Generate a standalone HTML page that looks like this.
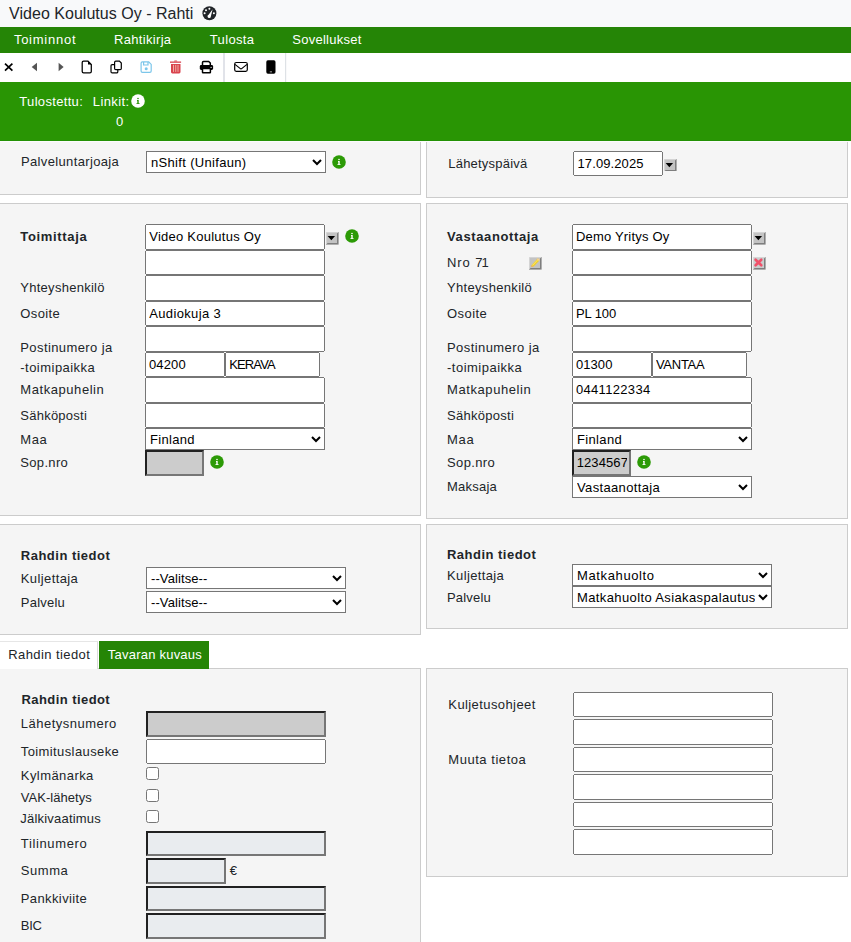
<!DOCTYPE html>
<html lang="fi"><head><meta charset="utf-8"><title>Video Koulutus Oy - Rahti</title>
<style>
html,body{margin:0;padding:0}
body{width:851px;height:942px;overflow:hidden;position:relative;background:#fff;font-family:"Liberation Sans",sans-serif;font-size:13px;color:#212529}
.titlebar{position:absolute;left:0;top:0;width:851px;height:27px;background:#f8f9fa}
.menubar{position:absolute;left:0;top:27px;width:851px;height:26px;background:#258506}
.menubar .t{margin-top:-27px}
.toolbar{position:absolute;left:0;top:53px;width:851px;height:29px;background:#fff}
.band{position:absolute;left:0;top:82px;width:851px;height:60px;box-sizing:border-box;background:#299504;z-index:2;border-bottom:1px solid #fbfbfb;box-shadow:inset 0 -1px 0 #239105}
.band .t,.band .ic{margin-top:-82px}
.t{position:absolute;white-space:pre;line-height:16px;font-size:13px}
.ic{position:absolute;display:block}
.panel{position:absolute;box-sizing:border-box;background:#f5f5f5;border:1px solid #ccc}
input[type=text]{position:absolute;box-sizing:border-box;margin:0;font-family:"Liberation Sans",sans-serif;font-size:13px;color:#000}
input.g{background-color:#ccc;border:2px inset #767676;color:#212529}
input.g2{background-color:#e9ecef;border:2px inset #767676}
select{position:absolute;box-sizing:border-box;margin:0;font-family:"Liberation Sans",sans-serif;font-size:13px;color:#000;background-color:#fff}
input[type=checkbox]{position:absolute;margin:0;width:13px;height:13px}
.tab1{position:absolute;left:0;top:641px;width:98px;height:28px;background:#fff;box-sizing:border-box;border-right:1px solid #dcdcdc;border-top:1px solid #e6e6e6}
.tab2{position:absolute;left:99px;top:641px;width:110px;height:28px;background:#258506}
</style></head>
<body>
<div class="titlebar">
<span class="t" style="left:9.1px;top:3px;letter-spacing:0.02px;font-size:16px;line-height:22px;color:#212529">Video Koulutus Oy - Rahti</span>
<svg class="ic" style="left:202px;top:5.5px" width="15" height="15" viewBox="0 0 15 15"><circle cx="7.4" cy="7.2" r="7" fill="#212529"/><circle cx="7.4" cy="2.8" r="1" fill="#fff"/><circle cx="4" cy="4.3" r="1" fill="#fff"/><circle cx="2.6" cy="7.3" r="1" fill="#fff"/><circle cx="11.9" cy="7.3" r="1" fill="#fff"/><path d="M10.6 3.2L8.9 10.2a1.7 1.7 0 1 1-2.3-1.4z" fill="#fff"/></svg>
</div>
<div class="menubar">
<span class="t" style="left:13.9px;top:32px;letter-spacing:0.745px;color:#fff">Toiminnot</span>
<span class="t" style="left:114.0px;top:32px;letter-spacing:0.324px;color:#fff">Rahtikirja</span>
<span class="t" style="left:209.8px;top:32px;letter-spacing:0.341px;color:#fff">Tulosta</span>
<span class="t" style="left:292.2px;top:32px;letter-spacing:0.272px;color:#fff">Sovellukset</span>
</div>
<div class="toolbar"><svg class="ic" style="left:0;top:0" width="300" height="29" viewBox="0 53 300 29" fill="none">
<rect x="223.2" y="53" width="1.6" height="29" fill="#dadde4"/>
<rect x="285" y="53" width="1.2" height="29" fill="#dee2e6"/>
<path d="M5 63.6L12.4 70.6M12.4 63.6L5 70.6" stroke="#000" stroke-width="1.7"/>
<path d="M37 62.8V71.2L31.7 67z" fill="#555"/>
<path d="M58.6 62.8V71.2L63.6 67z" fill="#555"/>
<path d="M82.2 62.6a1.4 1.4 0 0 1 1.4-1.4H88l3.3 3.3v6.9a1.4 1.4 0 0 1-1.4 1.4H83.6a1.4 1.4 0 0 1-1.4-1.4z" stroke="#000" stroke-width="1.25"/>
<path d="M88 61.2v3.3h3.3z" fill="#000"/>
<path d="M114.6 62.4a1.2 1.2 0 0 1 1.2-1.2h3.6l1.9 1.9v5.4a1.2 1.2 0 0 1-1.2 1.2h-4.3a1.2 1.2 0 0 1-1.2-1.2z" stroke="#000" stroke-width="1.2"/>
<path d="M114.4 64.6h-2.2a1.2 1.2 0 0 0-1.2 1.2v5.9a1.2 1.2 0 0 0 1.2 1.2h4.4a1.2 1.2 0 0 0 1.2-1.2v-1.8" stroke="#000" stroke-width="1.2"/>
<path d="M141.1 63.2a1.3 1.3 0 0 1 1.3-1.3h6.3l2.5 2.5v6.6a1.3 1.3 0 0 1-1.3 1.3h-7.5a1.3 1.3 0 0 1-1.3-1.3z" stroke="#7cc6ea" stroke-width="1.2"/>
<path d="M143.6 62v3h4.4v-3" stroke="#7cc6ea" stroke-width="1.2"/>
<circle cx="146.2" cy="68.7" r="1.5" fill="#7cc6ea"/>
<path d="M170 62.15h11.1" stroke="#d9434e" stroke-width="1.3"/>
<path d="M174.1 61.6v-.5a.7.7 0 0 1 .7-.7h1.7a.7.7 0 0 1 .7.7v.5z" fill="#d9434e"/>
<path d="M171 63.9h9.5v8.2a1.4 1.4 0 0 1-1.4 1.4h-6.7a1.4 1.4 0 0 1-1.4-1.4z" fill="#d9434e"/>
<path d="M173.5 64.9v7M175.75 64.9v7M178 64.9v7" stroke="#f3c3b4" stroke-width=".85"/>
<path d="M202.5 65v-2.6a1 1 0 0 1 1-1h5.2l1.6 1.6v2" stroke="#000" stroke-width="1.5"/>
<rect x="199.8" y="65" width="13.3" height="5" rx="1.4" fill="#000"/>
<rect x="202.5" y="68.6" width="7.9" height="4.2" rx=".5" stroke="#000" stroke-width="1.5" fill="#fff"/>
<circle cx="211.1" cy="67.4" r=".65" fill="#e8e8e8"/>
<rect x="234.7" y="62.5" width="12.6" height="8.8" rx="1.5" stroke="#000" stroke-width="1.2"/>
<path d="M235 64.4l5 4a1.6 1.6 0 0 0 2 0l5-4" stroke="#000" stroke-width="1.2"/>
<rect x="266.3" y="60.3" width="9.2" height="13.4" rx="1.6" fill="#000"/>
<rect x="269.8" y="71.2" width="2.2" height="1.2" fill="#8a8a8a"/>
</svg>
</div>
<div class="band">
<span class="t" style="left:19.3px;top:94px;letter-spacing:0.328px;color:#fff">Tulostettu:</span>
<span class="t" style="left:92.8px;top:94px;letter-spacing:0.372px;color:#fff">Linkit:</span>
<span class="t" style="left:116.0px;top:114px;letter-spacing:0px;color:#fff">0</span>
<svg class="ic" style="left:130.7px;top:94.3px" width="14" height="14" viewBox="0 0 14 14"><circle cx="7" cy="7" r="6.8" fill="#fff"/><circle cx="7" cy="4.55" r=".8" fill="#2a9505"/><path d="M6 6h1.7v3.2h.9v.9H5.4v-.9h.9V6.9H6z" fill="#2a9505"/></svg>
</div>
<div class="panel" style="left:-1px;top:140px;width:422px;height:55px"></div>
<div class="panel" style="left:-1px;top:203px;width:422px;height:313px"></div>
<div class="panel" style="left:-1px;top:524px;width:422px;height:111px"></div>
<div class="panel" style="left:-1px;top:668px;width:422px;height:300px"></div>
<div class="panel" style="left:426px;top:140px;width:422px;height:58px"></div>
<div class="panel" style="left:426px;top:203px;width:422px;height:316px"></div>
<div class="panel" style="left:426px;top:524px;width:422px;height:105px"></div>
<div class="panel" style="left:426px;top:668px;width:422px;height:209px"></div>
<span class="t" style="left:21.0px;top:154px;letter-spacing:0.352px">Palveluntarjoaja</span>
<select style="left:146px;top:151px;width:180px;height:22px;letter-spacing:0.325px"><option>nShift (Unifaun)</option></select>
<svg class="ic" style="left:332px;top:155px" width="14" height="14" viewBox="0 0 14 14"><circle cx="7" cy="7" r="6.8" fill="#2c9a06"/><circle cx="7" cy="4.55" r=".8" fill="#fff"/><path d="M6 6h1.7v3.2h.9v.9H5.4v-.9h.9V6.9H6z" fill="#fff"/></svg>
<span class="t" style="left:448.3px;top:156px;letter-spacing:0.207px">Lähetyspäivä</span>
<input type="text" style="left:573px;top:151px;width:90px;height:25px;letter-spacing:0.102px;padding-left:2.5px" value="17.09.2025">
<svg class="ic" style="left:664.2px;top:158.6px" width="12.6" height="12.6" viewBox="0 0 12.6 12.6"><rect width="12.6" height="12.6" fill="#7e7e7e"/><path d="M0 0h12.6L11 1.6V11H1.6L0 12.6z" fill="#d9d9d9"/><rect x=".8" y=".8" width="10.2" height="10.2" fill="#c3c3c3"/><path d="M1.6 3.9h7.5L5.35 8.3z" fill="#000"/></svg>
<span class="t" style="left:20.3px;top:229px;letter-spacing:0.674px;font-weight:700">Toimittaja</span>
<span class="t" style="left:20.3px;top:280px;letter-spacing:0.271px">Yhteyshenkilö</span>
<span class="t" style="left:20.3px;top:306px;letter-spacing:0.384px">Osoite</span>
<span class="t" style="left:20.3px;top:340px;letter-spacing:0.406px">Postinumero ja</span>
<span class="t" style="left:20.3px;top:360px;letter-spacing:0.467px">-toimipaikka</span>
<span class="t" style="left:20.3px;top:382px;letter-spacing:0.561px">Matkapuhelin</span>
<span class="t" style="left:20.3px;top:408px;letter-spacing:0.241px">Sähköposti</span>
<span class="t" style="left:20.3px;top:432px;letter-spacing:0.602px">Maa</span>
<span class="t" style="left:20.3px;top:455px;letter-spacing:0.326px">Sop.nro</span>
<input type="text" style="left:145px;top:224px;width:180px;height:26px;letter-spacing:0.253px;padding-left:2.2px;padding-bottom:2px" value="Video Koulutus Oy">
<input type="text" style="left:145px;top:250px;width:180px;height:25px" value="">
<input type="text" style="left:145px;top:275px;width:180px;height:26px;padding-bottom:2px" value="">
<input type="text" style="left:145px;top:301px;width:180px;height:25px;letter-spacing:0.355px;padding-left:2.2px" value="Audiokuja 3">
<input type="text" style="left:145px;top:326px;width:180px;height:26px;padding-bottom:2px" value="">
<input type="text" style="left:145px;top:352px;width:80px;height:25px;letter-spacing:0.161px;padding-left:1.9px" value="04200">
<input type="text" style="left:225px;top:352px;width:95px;height:25px;letter-spacing:-0.866px;padding-left:2.2px" value="KERAVA">
<input type="text" style="left:145px;top:377px;width:180px;height:26px;padding-bottom:2px" value="">
<input type="text" style="left:145px;top:403px;width:180px;height:25px" value="">
<select style="left:145px;top:428px;width:180px;height:22px;letter-spacing:0.327px"><option>Finland</option></select>
<input type="text" class="g" style="left:145px;top:450px;width:59px;height:26px" value="">
<svg class="ic" style="left:326.2px;top:232.2px" width="12.6" height="12.6" viewBox="0 0 12.6 12.6"><rect width="12.6" height="12.6" fill="#7e7e7e"/><path d="M0 0h12.6L11 1.6V11H1.6L0 12.6z" fill="#d9d9d9"/><rect x=".8" y=".8" width="10.2" height="10.2" fill="#c3c3c3"/><path d="M1.6 3.9h7.5L5.35 8.3z" fill="#000"/></svg>
<svg class="ic" style="left:344.9px;top:229.1px" width="14" height="14" viewBox="0 0 14 14"><circle cx="7" cy="7" r="6.8" fill="#2c9a06"/><circle cx="7" cy="4.55" r=".8" fill="#fff"/><path d="M6 6h1.7v3.2h.9v.9H5.4v-.9h.9V6.9H6z" fill="#fff"/></svg>
<svg class="ic" style="left:210px;top:455.3px" width="14" height="14" viewBox="0 0 14 14"><circle cx="7" cy="7" r="6.8" fill="#2c9a06"/><circle cx="7" cy="4.55" r=".8" fill="#fff"/><path d="M6 6h1.7v3.2h.9v.9H5.4v-.9h.9V6.9H6z" fill="#fff"/></svg>
<span class="t" style="left:447.0px;top:229px;letter-spacing:0.623px;font-weight:700">Vastaanottaja</span>
<span class="t" style="left:447.0px;top:255px;letter-spacing:0.923px">Nro</span>
<span class="t" style="left:475.3px;top:255px;letter-spacing:-0.969px">71</span>
<span class="t" style="left:447.0px;top:280px;letter-spacing:0.321px">Yhteyshenkilö</span>
<span class="t" style="left:447.0px;top:306px;letter-spacing:0.444px">Osoite</span>
<span class="t" style="left:447.0px;top:340px;letter-spacing:0.429px">Postinumero ja</span>
<span class="t" style="left:447.0px;top:360px;letter-spacing:0.495px">-toimipaikka</span>
<span class="t" style="left:447.0px;top:382px;letter-spacing:0.588px">Matkapuhelin</span>
<span class="t" style="left:447.0px;top:408px;letter-spacing:0.275px">Sähköposti</span>
<span class="t" style="left:447.0px;top:432px;letter-spacing:0.752px">Maa</span>
<span class="t" style="left:447.0px;top:455px;letter-spacing:0.376px">Sop.nro</span>
<span class="t" style="left:447.0px;top:479px;letter-spacing:0.23px">Maksaja</span>
<input type="text" style="left:572px;top:224px;width:180px;height:26px;letter-spacing:0.194px;padding-left:1.9px;padding-bottom:2px" value="Demo Yritys Oy">
<input type="text" style="left:572px;top:250px;width:180px;height:25px" value="">
<input type="text" style="left:572px;top:275px;width:180px;height:26px;padding-bottom:2px" value="">
<input type="text" style="left:572px;top:301px;width:180px;height:25px;letter-spacing:-0.087px;padding-left:1.9px" value="PL 100">
<input type="text" style="left:572px;top:326px;width:180px;height:26px;padding-bottom:2px" value="">
<input type="text" style="left:572px;top:352px;width:80px;height:25px;letter-spacing:0.086px;padding-left:1.9px" value="01300">
<input type="text" style="left:652px;top:352px;width:95px;height:25px;letter-spacing:-0.259px;padding-left:1.9px" value="VANTAA">
<input type="text" style="left:572px;top:377px;width:180px;height:26px;letter-spacing:0.328px;padding-left:1.9px;padding-bottom:2px" value="0441122334">
<input type="text" style="left:572px;top:403px;width:180px;height:25px" value="">
<select style="left:572px;top:428px;width:180px;height:22px;letter-spacing:0.343px"><option>Finland</option></select>
<input type="text" class="g" style="left:572px;top:450px;width:59px;height:26px;letter-spacing:0.096px;padding-left:2.7px;padding-bottom:3px;color:#000" value="1234567">
<select style="left:572px;top:476px;width:180px;height:22px;letter-spacing:0.346px"><option>Vastaanottaja</option></select>
<svg class="ic" style="left:753.2px;top:232.2px" width="12.6" height="12.6" viewBox="0 0 12.6 12.6"><rect width="12.6" height="12.6" fill="#7e7e7e"/><path d="M0 0h12.6L11 1.6V11H1.6L0 12.6z" fill="#d9d9d9"/><rect x=".8" y=".8" width="10.2" height="10.2" fill="#c3c3c3"/><path d="M1.6 3.9h7.5L5.35 8.3z" fill="#000"/></svg>
<svg class="ic" style="left:529.2px;top:257px" width="12.6" height="12.6" viewBox="0 0 12.6 12.6"><rect width="12.6" height="12.6" fill="#7e7e7e"/><path d="M0 0h12.6L11 1.6V11H1.6L0 12.6z" fill="#d9d9d9"/><rect x=".8" y=".8" width="10.2" height="10.2" fill="#c3c3c3"/><path d="M2.1 10L2.7 7.9 8.8 1.3 10.9 3.1 4.7 9.5z" fill="#f0d12e"/><path d="M8.8 1.3L10.9 3.1 10 4.1 7.9 2.3z" fill="#f5cfa2"/><path d="M2.1 10L2.7 7.9 4.7 9.5z" fill="#e9ab6d"/><path d="M3.4 8.4L8.6 3" stroke="#f9e878" stroke-width=".9"/></svg>
<svg class="ic" style="left:753.2px;top:257.1px" width="12.6" height="12.6" viewBox="0 0 12.6 12.6"><rect width="12.6" height="12.6" fill="#7e7e7e"/><path d="M0 0h12.6L11 1.6V11H1.6L0 12.6z" fill="#d9d9d9"/><rect x=".8" y=".8" width="10.2" height="10.2" fill="#c9cdcd"/><path d="M2.6 2.7L8.3 8.3M8.3 2.7L2.6 8.3" stroke="#f0516a" stroke-width="2.6" stroke-linecap="round"/></svg>
<svg class="ic" style="left:636.8px;top:455.3px" width="14" height="14" viewBox="0 0 14 14"><circle cx="7" cy="7" r="6.8" fill="#2c9a06"/><circle cx="7" cy="4.55" r=".8" fill="#fff"/><path d="M6 6h1.7v3.2h.9v.9H5.4v-.9h.9V6.9H6z" fill="#fff"/></svg>
<span class="t" style="left:20.8px;top:548px;letter-spacing:0.496px;font-weight:700">Rahdin tiedot</span>
<span class="t" style="left:20.8px;top:571px;letter-spacing:0.391px">Kuljettaja</span>
<span class="t" style="left:20.8px;top:595px;letter-spacing:0.227px">Palvelu</span>
<select style="left:146px;top:567px;width:200px;height:22px;letter-spacing:0.093px"><option>--Valitse--</option></select>
<select style="left:146px;top:591px;width:200px;height:22px;letter-spacing:0.093px"><option>--Valitse--</option></select>
<span class="t" style="left:447.0px;top:547px;letter-spacing:0.479px;font-weight:700">Rahdin tiedot</span>
<span class="t" style="left:447.0px;top:568px;letter-spacing:0.368px">Kuljettaja</span>
<span class="t" style="left:447.0px;top:590px;letter-spacing:0.193px">Palvelu</span>
<select style="left:572px;top:564px;width:200px;height:22px;letter-spacing:0.627px"><option>Matkahuolto</option></select>
<select style="left:572px;top:586px;width:200px;height:22px;letter-spacing:0.381px"><option>Matkahuolto Asiakaspalautus</option></select>
<div class="tab1"></div><div class="tab2"></div>
<span class="t" style="left:8.3px;top:647px;letter-spacing:0.406px">Rahdin tiedot</span>
<span class="t" style="left:107.8px;top:647px;letter-spacing:0.226px;color:#fff">Tavaran kuvaus</span>
<span class="t" style="left:21.5px;top:692px;letter-spacing:0.429px;font-weight:700">Rahdin tiedot</span>
<span class="t" style="left:20.8px;top:716px;letter-spacing:0.49px">Lähetysnumero</span>
<span class="t" style="left:20.8px;top:744px;letter-spacing:0.393px">Toimituslauseke</span>
<span class="t" style="left:20.8px;top:768px;letter-spacing:0.429px">Kylmänarka</span>
<span class="t" style="left:20.8px;top:790px;letter-spacing:0.042px">VAK-lähetys</span>
<span class="t" style="left:20.3px;top:811px;letter-spacing:0.206px">Jälkivaatimus</span>
<span class="t" style="left:20.8px;top:836px;letter-spacing:0.644px">Tilinumero</span>
<span class="t" style="left:20.8px;top:863px;letter-spacing:0.551px">Summa</span>
<span class="t" style="left:20.8px;top:891px;letter-spacing:0.386px">Pankkiviite</span>
<span class="t" style="left:20.8px;top:918px;letter-spacing:-0.336px">BIC</span>
<input type="text" class="g" style="left:146px;top:711px;width:180px;height:26px" value="">
<input type="text" style="left:146px;top:739px;width:180px;height:25px" value="">
<input type="checkbox" style="left:146px;top:767px">
<input type="checkbox" style="left:146px;top:789px">
<input type="checkbox" style="left:146px;top:810px">
<input type="text" class="g2" style="left:146px;top:831px;width:180px;height:25px" value="">
<input type="text" class="g2" style="left:146px;top:858px;width:80px;height:26px" value="">
<span class="t" style="left:229.8px;top:863px;letter-spacing:0px">€</span>
<input type="text" class="g2" style="left:146px;top:886px;width:180px;height:25px" value="">
<input type="text" class="g2" style="left:146px;top:913px;width:180px;height:26px" value="">
<span class="t" style="left:448.3px;top:697px;letter-spacing:0.41px">Kuljetusohjeet</span>
<span class="t" style="left:448.3px;top:752px;letter-spacing:0.541px">Muuta tietoa</span>
<input type="text" style="left:573px;top:692px;width:200px;height:25px" value="">
<input type="text" style="left:573px;top:719px;width:200px;height:26px;padding-bottom:2px" value="">
<input type="text" style="left:573px;top:747px;width:200px;height:25px" value="">
<input type="text" style="left:573px;top:774px;width:200px;height:26px;padding-bottom:2px" value="">
<input type="text" style="left:573px;top:802px;width:200px;height:25px" value="">
<input type="text" style="left:573px;top:829px;width:200px;height:26px;padding-bottom:2px" value="">
</body></html>
